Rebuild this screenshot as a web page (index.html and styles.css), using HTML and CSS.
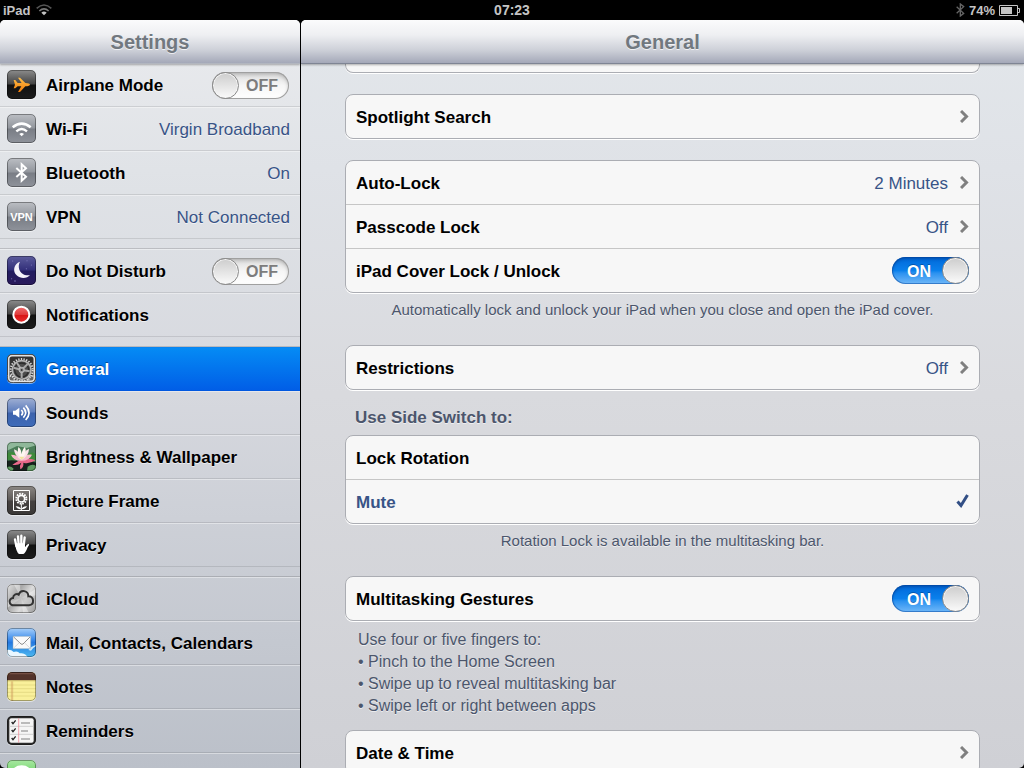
FILE: index.html
```html
<!DOCTYPE html>
<html lang="en">
<head>
    <meta charset="UTF-8">
    <meta name="viewport" content="width=device-width, initial-scale=1.0">
    <title>Settings</title>
    <link rel="stylesheet" href="styles.css">
</head>
<body>
    <header class="status">
        <div class="status-left">
            <span>iPad</span>
            <svg width="16" height="12" viewBox="0 0 48 36" fill="none" stroke="#777" stroke-width="5">
                <path d="M2 13Q24 -7 46 13" stroke="#555"/>
                <path d="M10 21Q24 8 38 21"/>
                <path d="M16 26Q24 19 32 26L24 34z" fill="#c4c4c4" stroke="none"/>
            </svg>
        </div>
        <time>07:23</time>
        <div class="status-right">
            <svg width="9" height="14" viewBox="0 0 27 42" fill="none" stroke="#666" stroke-width="4">
                <path d="M2 11L23 31L13 39V3L23 11L2 31"/>
            </svg>
            <span>74%</span>
            <svg width="22" height="11" viewBox="0 0 22 11">
                <path d="M.5 .5H18.500V10.500H.5z" fill="none" stroke="#c4c4c4"/>
                <path d="M2 2H13V9H2z" fill="#c4c4c4"/>
                <path d="M19 3.500H20.500V7.500H19" fill="none" stroke="#c4c4c4"/>
            </svg>
        </div>
    </header>

    <div class="panes">
        <nav class="sidebar">
            <h1 class="bar">Settings</h1>
            <div class="menu">
                <div class="menu-group">
                    <label class="item">
                        <span class="icon black">
                            <svg viewBox="0 0 87 87"><defs><linearGradient id="orange" x2="0" y2="1"><stop stop-color="#ffc04a"/><stop offset="1" stop-color="#f07a08"/></linearGradient></defs><path fill="url(#orange)" d="M20 30H25L32 39H44L33 23H39L55 39Q69 40 69 44T55 49L39 66H33L43 49H32L25 55H20L24 44z"/></svg>
                        </span>
                        <span class="name">Airplane Mode</span>
                        <input type="checkbox" class="toggle">
                        <span class="switch"><span class="state">OFF</span></span>
                    </label>
                    <a class="item" href="#">
                        <span class="icon grey">
                            <svg viewBox="0 0 87 87" fill="none" stroke="#fff"><path stroke-width="8" d="M17 40Q44 18 71 40"/><path stroke-width="7" d="M28 52Q44 38 60 52"/><path fill="#fff" stroke="none" d="M37 60Q44 54 51 60L44 67z"/></svg>
                        </span>
                        <span class="name">Wi-Fi</span>
                        <span class="value">Virgin Broadband</span>
                    </a>
                    <a class="item" href="#">
                        <span class="icon grey">
                            <svg viewBox="0 0 87 87" fill="none" stroke="#fff" stroke-width="6"><path d="M28 30L57 56L44 68V19L57 31L28 57"/></svg>
                        </span>
                        <span class="name">Bluetooth</span>
                        <span class="value">On</span>
                    </a>
                    <a class="item" href="#">
                        <span class="icon grey vpn">VPN</span>
                        <span class="name">VPN</span>
                        <span class="value">Not Connected</span>
                    </a>
                </div>

                <div class="menu-group">
                    <label class="item">
                        <span class="icon night">
                            <svg viewBox="0 0 87 87"><path fill="#f4f2fa" d="M39 17C20 24 16 46 29 58C42 70 61 67 69 57C54 60 42 53 37 41C34 32 35 24 39 17z"/><g fill="#8a86c8"><circle cx="17" cy="15" r="1.500"/><circle cx="60" cy="14" r="1.500"/><circle cx="73" cy="27" r="1.500"/><circle cx="14" cy="68" r="1.500"/><circle cx="24" cy="75" r="2"/><circle cx="58" cy="38" r="1.500"/></g></svg>
                        </span>
                        <span class="name">Do Not Disturb</span>
                        <input type="checkbox" class="toggle">
                        <span class="switch"><span class="state">OFF</span></span>
                    </label>
                    <a class="item" href="#">
                        <span class="icon black">
                            <svg viewBox="0 0 87 87"><defs><linearGradient id="red" x2="0" y2="1"><stop stop-color="#f07070"/><stop offset=".5" stop-color="#e03a3a"/><stop offset=".51" stop-color="#d81414"/><stop offset="1" stop-color="#e83030"/></linearGradient></defs><circle cx="43" cy="44" r="24" fill="url(#red)" stroke="#fff" stroke-width="6"/></svg>
                        </span>
                        <span class="name">Notifications</span>
                    </a>
                </div>

                <div class="menu-group">
                    <a class="item selected" href="#">
                        <span class="icon gears">
                            <svg viewBox="0 0 87 87" fill="none">
                                <path fill="#555" d="M0 0H87V87H0z"/>
                                <path fill="#333" d="M6 6H81V81H6z"/>
                                <circle cx="44" cy="48" r="33" stroke="#d8d8d8" stroke-width="6" stroke-dasharray="4 4"/>
                                <circle cx="44" cy="48" r="28" fill="#4c4c4c" stroke="#b4b4b4" stroke-width="5"/>
                                <circle cx="44" cy="48" r="21" stroke="#2c2c2c" stroke-width="4"/>
                                <path stroke="#a8a8a8" stroke-width="6" d="M44 48V72M44 48L20 41M44 48L30 27M44 48L62 30M44 48L68 52"/>
                                <circle cx="44" cy="48" r="8" fill="#999" stroke="#ccc" stroke-width="2"/>
                                <circle cx="44" cy="48" r="3" fill="#333"/>
                                <circle cx="8" cy="80" r="15" fill="#666" stroke="#ddd" stroke-width="6" stroke-dasharray="4 3"/>
                                <circle cx="79" cy="80" r="15" fill="#666" stroke="#ddd" stroke-width="6" stroke-dasharray="4 3"/>
                                <rect x="5" y="5" width="77" height="77" rx="10" stroke="#e2e2e2" stroke-width="5"/>
                            </svg>
                        </span>
                        <span class="name">General</span>
                    </a>
                    <a class="item" href="#">
                        <span class="icon blue">
                            <svg viewBox="0 0 87 87" fill="none" stroke="#fff" stroke-width="5"><path fill="#fff" stroke="none" d="M18 38H25L37 29V59L25 50H18z"/><path d="M43 36Q51 44 43 52"/><path d="M49 29Q63 44 49 59"/><path d="M56 22Q76 44 56 66"/></svg>
                        </span>
                        <span class="name">Sounds</span>
                    </a>
                    <a class="item" href="#">
                        <span class="icon">
                            <svg viewBox="0 0 87 87">
                                <path fill="#4a7d58" d="M0 0H87V87H0z"/>
                                <path fill="#8fb89a" d="M0 0H87V10L60 18L30 12L0 26z"/>
                                <path fill="#3f8a3c" d="M0 34Q20 24 34 40L20 58L0 52zM58 40Q78 24 87 38V54L66 58z"/>
                                <path fill="#16211d" d="M0 56Q22 52 44 60Q66 52 87 62V87H0z"/>
                                <path fill="#5f9a62" d="M62 74Q76 64 87 72V87H60zM0 76Q10 70 20 80L16 87H0z"/>
                                <path fill="#e8688a" d="M42 52L16 68Q32 72 43 62Q36 72 40 82Q51 76 49 62Q64 68 86 55Q66 48 44 52z"/>
                                <path fill="#f5bcca" d="M43 56Q18 56 12 38Q32 38 43 54Q54 36 75 38Q68 56 43 56z"/>
                                <path fill="#fbe3e8" d="M43 54Q22 42 21 22Q38 28 43 50Q50 26 66 20Q66 42 43 54z"/>
                                <path fill="#fff6f0" d="M43 52Q28 36 34 15Q46 24 44 48Q42 26 54 14Q62 34 43 52z"/>
                                <path fill="#f3e49a" d="M36 44H52L44 53z"/>
                            </svg>
                        </span>
                        <span class="name">Brightness &amp; Wallpaper</span>
                    </a>
                    <a class="item" href="#">
                        <span class="icon charcoal">
                            <svg viewBox="0 0 87 87" fill="none" stroke="#fff"><path stroke-width="3" d="M19.500 13.500H67.500V73.500H19.500z"/><circle cx="43" cy="38" r="10" stroke-width="5"/><circle cx="43" cy="38" r="15" stroke-width="6" stroke-dasharray="4.800 3"/><path stroke-width="3" d="M43 52V72"/><path fill="#fff" stroke="none" d="M43 70Q38 60 26 61Q30 70 43 70zM43 70Q48 60 60 61Q56 70 43 70z"/></svg>
                        </span>
                        <span class="name">Picture Frame</span>
                    </a>
                    <a class="item" href="#">
                        <span class="icon black">
                            <svg viewBox="0 0 87 87" fill="none" stroke="#fff" stroke-width="7" stroke-linecap="round"><path d="M28 48L24 28M35 44L33 19M43 44V17M50 46L53 22"/><path fill="#fff" stroke="none" d="M24 40H54L54 52Q59 42 66 41Q68 44 62 52Q56 69 49 72H36Q27 66 24 40z"/></svg>
                        </span>
                        <span class="name">Privacy</span>
                    </a>
                </div>

                <div class="menu-group">
                    <a class="item" href="#">
                        <span class="icon silver">
                            <svg viewBox="0 0 87 87"><path d="M43 43L20 0H38zM43 43L87 14V34zM43 43L66 87H48zM43 43L0 72V54z" fill="#fff" opacity=".4"/><path d="M22 64C4 64 4 43 18 42C19 31 30 28 35 32C41 15 64 19 64 37C81 36 84 62 66 64z" fill="#bbb" fill-opacity=".5" stroke="#333" stroke-width="6"/></svg>
                        </span>
                        <span class="name">iCloud</span>
                    </a>
                    <a class="item" href="#">
                        <span class="icon sky">
                            <svg viewBox="0 0 87 87"><path fill="#eaf7ff" d="M0 66Q12 64 20 72Q32 68 38 76Q50 74 56 80L62 87H0z"/><path fill="#cdeafc" d="M64 66Q74 54 87 50V54Q76 60 72 68z"/><path fill="#fafafa" stroke="#8aa4b8" stroke-width="1.500" d="M18 25H71V62H18z"/><path fill="none" stroke="#777" stroke-width="2.500" d="M20 27L42 48Q45 50 48 48L69 27"/><path fill="none" stroke="#bbb" stroke-width="1.500" d="M20 60L37 44M69 60L52 44"/></svg>
                        </span>
                        <span class="name">Mail, Contacts, Calendars</span>
                    </a>
                    <a class="item" href="#">
                        <span class="icon">
                            <svg viewBox="0 0 87 87"><path fill="#f9f09a" d="M0 0H87V87H0z"/><path fill="#53332a" d="M0 0H87V25H0z"/><path fill="#754f44" d="M0 3H87V7H0z"/><path fill="#c8b66a" d="M0 25H87V28H0z"/><path fill="none" stroke="#ddd27a" stroke-width="2" d="M0 39H87M0 50H87M0 61H87M0 72H87"/><path fill="none" stroke="#c98f55" stroke-width="1.500" d="M13 28V87M17 28V87"/></svg>
                        </span>
                        <span class="name">Notes</span>
                    </a>
                    <a class="item" href="#">
                        <span class="icon">
                            <svg viewBox="0 0 87 87" fill="none"><path fill="#2b2b2b" d="M0 0H87V87H0z"/><rect x="7" y="7" width="73" height="73" rx="6" fill="#f5f5f5"/><path stroke="#bbb" stroke-width="2" d="M7 31H80M7 55H80"/><path stroke="#f0808c" stroke-width="2" d="M35 7V80"/><path stroke="#a6a6a6" stroke-width="5" d="M42 21H69M42 45H63M42 69H69"/><path stroke="#222" stroke-width="4" d="M14 18L18 23L26 13M14 42L18 47L26 37M14 66L18 71L26 61"/></svg>
                        </span>
                        <span class="name">Reminders</span>
                    </a>
                    <a class="item" href="#" aria-label="Messages">
                        <span class="icon green">
                            <svg viewBox="0 0 87 87"><ellipse cx="44" cy="40" rx="31" ry="24" fill="#fff"/><path fill="#fff" d="M24 54L18 74L42 62z"/></svg>
                        </span>
                    </a>
                </div>
            </div>
        </nav>

        <main class="detail">
            <h2 class="bar">General</h2>
            <div class="content">
                <div class="card card-end"></div>

                <div class="card">
                    <a class="row" href="#">
                        <span class="name">Spotlight Search</span>
                        <svg class="chevron" viewBox="0 0 9 13"><path d="M1 1L6.500 6.500L1 12"/></svg>
                    </a>
                </div>

                <div class="card">
                    <a class="row" href="#">
                        <span class="name">Auto-Lock</span>
                        <span class="value">2 Minutes</span>
                        <svg class="chevron" viewBox="0 0 9 13"><path d="M1 1L6.500 6.500L1 12"/></svg>
                    </a>
                    <a class="row" href="#">
                        <span class="name">Passcode Lock</span>
                        <span class="value">Off</span>
                        <svg class="chevron" viewBox="0 0 9 13"><path d="M1 1L6.500 6.500L1 12"/></svg>
                    </a>
                    <label class="row">
                        <span class="name">iPad Cover Lock / Unlock</span>
                        <input type="checkbox" class="toggle" checked>
                        <span class="switch"><span class="state">ON</span></span>
                    </label>
                </div>
                <p class="note">Automatically lock and unlock your iPad when you close and open the iPad cover.</p>

                <div class="card">
                    <a class="row" href="#">
                        <span class="name">Restrictions</span>
                        <span class="value">Off</span>
                        <svg class="chevron" viewBox="0 0 9 13"><path d="M1 1L6.500 6.500L1 12"/></svg>
                    </a>
                </div>

                <h3 class="heading">Use Side Switch to:</h3>
                <div class="card">
                    <label class="row">
                        <input type="radio" name="side-switch" class="choice">
                        <span class="name">Lock Rotation</span>
                        <svg class="check" viewBox="0 0 13 14"><path d="M1.500 7.500L5 11.500L11.500 1"/></svg>
                    </label>
                    <label class="row">
                        <input type="radio" name="side-switch" class="choice" checked>
                        <span class="name">Mute</span>
                        <svg class="check" viewBox="0 0 13 14"><path d="M1.500 7.500L5 11.500L11.500 1"/></svg>
                    </label>
                </div>
                <p class="note">Rotation Lock is available in the multitasking bar.</p>

                <div class="card">
                    <label class="row">
                        <span class="name">Multitasking Gestures</span>
                        <input type="checkbox" class="toggle" checked>
                        <span class="switch"><span class="state">ON</span></span>
                    </label>
                </div>
                <div class="tips">
                    <p>Use four or five fingers to:</p>
                    <p>• Pinch to the Home Screen</p>
                    <p>• Swipe up to reveal multitasking bar</p>
                    <p>• Swipe left or right between apps</p>
                </div>

                <div class="card">
                    <a class="row" href="#">
                        <span class="name">Date &amp; Time</span>
                        <svg class="chevron" viewBox="0 0 9 13"><path d="M1 1L6.500 6.500L1 12"/></svg>
                    </a>
                </div>
            </div>
        </main>
    </div>

    <script>
        document.querySelectorAll('.toggle').forEach(function(toggle) {
            toggle.addEventListener('change', function() {
                const state = toggle.parentNode.querySelector('.state');
                state.textContent = toggle.checked ? 'ON' : 'OFF';
            });
        });
    </script>
</body>
</html>
```
FILE: styles.css
```css
*, *::before, *::after {
    box-sizing: border-box;
}

body {
    margin: 0;
    height: 100vh;
    overflow: hidden;
    display: flex;
    flex-direction: column;
    background: #000;
    color: #000;
    font-family: "Liberation Sans", Arial, Helvetica, sans-serif;
    font-size: 17px;
}

h1, h2, h3, p {
    margin: 0;
}

a {
    color: inherit;
    text-decoration: none;
}

svg {
    display: block;
}

/* status bar */
.status {
    flex: none;
    display: grid;
    grid-template-columns: 1fr auto 1fr;
    align-items: center;
    height: 20px;
    padding: 0 3px;
    color: #c4c4c4;
    font-size: 13px;
    font-weight: bold;
}

.status time {
    font-size: 14px;
}

.status-left, .status-right {
    display: flex;
    align-items: center;
    gap: 6px;
}

.status-right {
    justify-content: flex-end;
    gap: 4px;
}

/* panes */
.panes {
    flex: 1;
    min-height: 0;
    display: flex;
    gap: 1px;
}

.sidebar, .detail {
    display: flex;
    flex-direction: column;
    overflow: hidden;
    border-radius: 5px;
}

.sidebar {
    flex: none;
    width: 300px;
    border-bottom-right-radius: 0;
    background: linear-gradient(#eaebee, #e0e3e7 20%, #d6d8de 50%, #bbc0c9);
}

.detail {
    flex: 1;
    border-bottom-left-radius: 0;
    background: linear-gradient(#e3e7eb, #dfe2e7 20%, #d9dade 50%, #cfd0d5);
}

.bar {
    flex: none;
    position: relative;
    height: 44px;
    border-bottom: 1px solid #7f8594;
    background: linear-gradient(#fbfbfc, #eeeff2 35%, #cdd0d8 70%, #a4a8b8);
    box-shadow: 0 1px 2px rgba(0, 0, 0, 0.3);
    color: #71787f;
    font-size: 20px;
    line-height: 44px;
    text-align: center;
    text-shadow: 0 1px 0 rgba(255, 255, 255, 0.7);
}

.menu, .content {
    flex: 1;
    min-height: 0;
    overflow-y: auto;
    scrollbar-width: none;
}

/* left menu */
.menu {
    margin-top: -1px;
}

.menu-group {
    margin-bottom: 10px;
    box-shadow: 0 -1px 0 rgba(0, 0, 0, 0.15);
}

.item {
    position: relative;
    display: flex;
    align-items: center;
    height: 44px;
    padding: 0 10px 0 7px;
    border-top: 1px solid rgba(255, 255, 255, 0.4);
    border-bottom: 1px solid rgba(0, 0, 0, 0.1);
    text-shadow: 0 1px 0 rgba(255, 255, 255, 0.6);
}

.name, .value {
    padding-top: 2px;
}

.name {
    flex: 1;
    font-weight: bold;
}

.value {
    color: #385487;
}

.selected {
    border-color: #0a84f0 transparent #0058e0;
    background: linear-gradient(#058cf5, #015de6) border-box;
    color: #fff;
    text-shadow: 0 -1px 0 rgba(0, 0, 0, 0.4);
}

.icon {
    flex: none;
    position: relative;
    width: 29px;
    height: 29px;
    margin: 0 10px 2px 0;
    border-radius: 5px;
    overflow: hidden;
    box-shadow: 0 1px 0 rgba(255, 255, 255, 0.5);
}

/* thin rim over the artwork */
.icon::after {
    content: "";
    position: absolute;
    inset: 0;
    border: 1px solid rgba(0, 0, 0, 0.35);
    border-radius: 5px;
}

.icon svg {
    width: 29px;
    height: 29px;
}

.black {
    background: linear-gradient(#8c8c8c, #444 48%, #111 52%, #1c1c1c);
}

.charcoal {
    background: linear-gradient(#8c8885, #5e5a58 48%, #454140 52%, #3a3837);
}

.grey {
    background: linear-gradient(#bcbfc4, #92969d 48%, #797d85 52%, #8f939b);
}

.night {
    background: linear-gradient(#5c5c9c, #33307a 48%, #221c60 52%, #2a1a5c);
}

.blue {
    background: linear-gradient(#a0b0d4, #5c7cbc 48%, #3c62ac 52%, #3e6cba);
}

.silver {
    background: linear-gradient(120deg, #e4e4e4, #a8a8a8 35%, #dcdcdc 60%, #989898);
}

.sky {
    background: linear-gradient(#a8d0fa, #3c8cec 40%, #2478e0 50%, #4cb8f0);
}

.green {
    background: linear-gradient(#a8e8a0, #3cc03c);
}

.vpn {
    color: #fff;
    font-size: 11px;
    font-weight: bold;
    line-height: 30px;
    text-align: center;
    text-shadow: none;
}

/* on/off switch */
.toggle, .choice {
    position: absolute;
    margin: 0;
    opacity: 0;
}

.switch {
    display: flex;
    align-items: center;
    width: 77px;
    height: 27px;
    margin-right: 1px;
    border-radius: 14px;
    background: linear-gradient(#dcdcdc, #f6f6f6 50%, #fff);
    box-shadow: inset 0 0 0 1px #a0a0a0, inset 0 2px 4px rgba(0, 0, 0, 0.25);
    color: #7c7c7c;
    font-size: 16px;
    font-weight: bold;
    text-shadow: none;
}

.switch::before {
    content: "";
    width: 27px;
    height: 27px;
    border: 1px solid #8a8a8a;
    border-radius: 50%;
    background: linear-gradient(#cdcdcd, #fafafa);
    box-shadow: inset 0 0 0 1px #f4f4f4;
}

.state {
    flex: 1;
    padding: 2px 4px 0 0;
    text-align: center;
}

.toggle:checked + .switch {
    flex-direction: row-reverse;
    margin-right: 0;
    background: linear-gradient(#0068d8, #0a80ec 50%, #2c92f0 60%, #70b8f8);
    box-shadow: inset 0 0 0 1px rgba(0, 70, 160, 0.5), inset 0 2px 3px rgba(0, 40, 110, 0.4);
    color: #fff;
    text-shadow: 0 -1px 0 rgba(0, 50, 120, 0.5);
}

.toggle:checked + .switch .state {
    padding: 2px 0 0 4px;
}

/* right side */
.content {
    padding: 0 44px;
}

.card {
    margin-bottom: 21px;
    border: 1px solid #abadb3;
    border-radius: 8px;
    background: #f7f7f7;
    box-shadow: 0 1px 0 #fff;
}

.card-end {
    height: 9px;
    border-top: 0;
    border-radius: 0 0 8px 8px;
}

.row {
    position: relative;
    display: flex;
    align-items: center;
    height: 43px;
    padding: 0 10px;
}

.row + .row {
    height: 44px;
    border-top: 1px solid #c6c6c6;
}

.chevron {
    width: 9px;
    height: 13px;
    margin-left: 12px;
    fill: none;
    stroke: #808080;
    stroke-width: 3;
}

.check {
    display: none;
    width: 13px;
    height: 14px;
    margin-bottom: 2px;
    fill: none;
    stroke: #324f85;
    stroke-width: 3;
}

.choice:checked ~ .name {
    color: #385487;
}

.choice:checked ~ .check {
    display: block;
}

.note, .tips, .heading {
    color: #4c566c;
    text-shadow: 0 1px 0 rgba(255, 255, 255, 0.6);
}

.note {
    margin: -14px 0 26px;
    font-size: 15px;
    line-height: 19px;
    text-align: center;
}

.heading {
    margin: -4px 10px 6px;
    font-size: 17px;
    line-height: 22px;
}

.tips {
    margin: -13px 13px 13px;
    font-size: 16px;
    line-height: 22px;
}
```
